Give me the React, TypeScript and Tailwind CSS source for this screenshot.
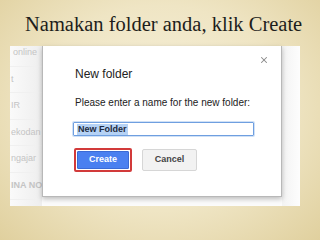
import { X } from 'lucide-react';

const sidebarRows = ['online', 't', 'IR', 'ekodan', 'ngajar', 'INA NO'];

export default function App() {
  return (
    <div className="w-[320px] h-[240px] overflow-hidden bg-[radial-gradient(ellipse_at_50%_45%,#f7f1dc_0%,#efe5c4_55%,#e0d09e_100%)]">
      {/* Slide title */}
      <div className="pt-[11px] pl-[25px] h-[46px] text-[20.5px] leading-[26px] text-[#1d1d1b] whitespace-nowrap [font-family:'Liberation_Serif',serif]">
        Namakan folder anda, klik Create
      </div>

      {/* Screenshot */}
      <div className="ml-[10px] w-[290px] h-[160px] bg-[#fbfbfb] flex [font-family:'Liberation_Sans',Arial,sans-serif]">
        {/* Faded sidebar behind the dialog */}
        <div className="w-[32px] shrink-0 overflow-hidden bg-gradient-to-r from-[#fafafa] to-[#eeeeee]">
          <div className="-mt-[6px]">
            {sidebarRows.map((row, i) => (
              <div
                key={i}
                className={`h-[26.6px] flex items-center whitespace-nowrap text-[9px] text-[#c4c4c4] border-b border-[#f0f0f0] ${
                  i === 0 ? 'pl-[3px]' : 'pl-[1px]'
                } ${i === 5 ? 'font-bold' : ''}`}
              >
                {row}
              </div>
            ))}
          </div>
        </div>

        {/* Dialog */}
        <div className="relative w-[240px] h-[151px] shrink-0 bg-white border border-[#b8b8b8] border-t-0 shadow-[0_2px_5px_rgba(0,0,0,0.25)]">
          <X className="absolute left-[216px] top-[9px] w-[10px] h-[10px] text-[#8a8a8a]" strokeWidth={2.5} />

          <div className="pl-[32px] pt-[21px] text-[12px] leading-[14px] text-[#222]">New folder</div>
          <div className="pl-[32px] pt-[16px] text-[10px] leading-[12px] text-[#222]">
            Please enter a name for the new folder:
          </div>

          <div className="ml-[30px] mt-[13px] w-[181px] h-[14px] border border-[#6f9fe0] rounded-[1px] flex items-center pl-[3px] shadow-[0_0_0_1px_rgba(120,170,230,0.35)]">
            <span className="bg-[#b5d2f5] text-[9px] leading-[11px] font-semibold text-[#1e2a40] px-[1px]">New Folder</span>
          </div>

          <div className="flex items-start gap-[10px] ml-[31px] mt-[12px]">
            <div className="w-[58px] h-[24px] border-2 border-[#d23a3a] rounded-[2px] p-px">
              <div className="w-full h-full bg-[#4a80f0] border border-[#3a6bd6] rounded-[1px] flex items-center justify-center text-[9px] font-bold text-white">
                Create
              </div>
            </div>
            <div className="mt-px w-[55px] h-[22px] bg-[#f2f2f2] border border-[#d6d6d6] rounded-[2px] flex items-center justify-center text-[9px] font-bold text-[#444]">
              Cancel
            </div>
          </div>
        </div>

        <div className="flex-1 bg-gradient-to-r from-[#f3f3f3] to-[#fdfdfd]" />
      </div>
    </div>
  );
}
